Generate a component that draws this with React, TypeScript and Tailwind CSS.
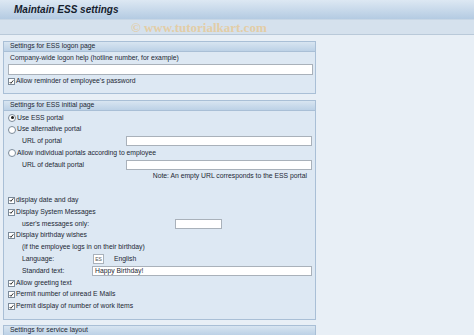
const Check = () => (
  <span className="w-[7px] h-[7px] border border-[#7b8a99] bg-white flex items-center justify-center mr-[1px] shrink-0">
    <svg width="6" height="6" viewBox="0 0 6 6">
      <path d="M0.8 3 L2.3 4.6 L5.2 1" stroke="#1a1a1a" strokeWidth="1.1" fill="none" />
    </svg>
  </span>
)

const Radio = ({ on }: { on?: boolean }) => (
  <span className="w-[8px] h-[8px] rounded-full border border-[#7b8a99] bg-white flex items-center justify-center mr-[1px] shrink-0">
    {on && <span className="w-[3px] h-[3px] rounded-full bg-[#1a1a1a]" />}
  </span>
)

const Row = ({ children, className = '' }: { children?: React.ReactNode; className?: string }) => (
  <div className={`h-[11.8px] flex items-center ${className}`}>{children}</div>
)

const Input = ({ className = '', value = '' }: { className?: string; value?: string }) => (
  <div className={`h-[10px] bg-white border border-[#a9b1ba] flex items-center pl-[2px] ${className}`}>{value}</div>
)

const Header = ({ text }: { text: string }) => (
  <div className="h-[10px] flex items-center pl-[6px] bg-gradient-to-b from-[#d8e5f1] to-[#bcd1e6] border-b border-[#a9bfd6]">
    {text}
  </div>
)

export default function App() {
  return (
    <div className="w-[474px] h-[335px] overflow-hidden bg-[#e8eff6] text-[#1c2733] text-[6.8px] leading-none" style={{ fontFamily: '"Liberation Sans", Arial, sans-serif' }}>
      <div className="h-[20px] flex items-center pl-[14px] bg-gradient-to-b from-[#dde8f3] to-[#b4cbe2] border-b border-[#c7d6e5]">
        <span className="text-[10px] font-bold italic text-[#15202c]">Maintain ESS settings</span>
      </div>
      <div className="h-[15px] flex items-center pl-[131px] bg-[#d5e1ed] border-b border-[#b9c9d9]">
        <span className="text-[13px] font-bold text-[#e3cda6]" style={{ fontFamily: '"Liberation Serif", serif' }}>
          © www.tutorialkart.com
        </span>
      </div>

      <div className="ml-[3px] w-[313px] mt-[6px] border border-[#a9bfd6] bg-[#dde8f3]">
        <Header text="Settings for ESS logon page" />
        <div className="px-[2px] pb-[5px]">
          <Row className="pl-[4px] h-[12px]">Company-wide logon help (hotline number, for example)</Row>
          <Input className="ml-[2px] w-[305px] h-[11px]" />
          <Row className="h-[13px] pl-[2px]"><Check />Allow reminder of employee's password</Row>
        </div>
      </div>

      <div className="ml-[3px] w-[313px] mt-[6px] border border-[#a9bfd6] bg-[#dde8f3]">
        <Header text="Settings for ESS initial page" />
        <div className="px-[2px] pt-[1px] pb-[6px]">
          <Row className="pl-[2px]"><Radio on />Use ESS portal</Row>
          <Row className="pl-[2px]"><Radio />Use alternative portal</Row>
          <Row className="pl-[16px]"><span className="w-[104px]">URL of portal</span><Input className="w-[186px]" /></Row>
          <Row className="pl-[2px]"><Radio />Allow individual portals according to employee</Row>
          <Row className="pl-[16px]"><span className="w-[104px]">URL of default portal</span><Input className="w-[186px]" /></Row>
          <Row className="justify-end pr-[6px]">Note: An empty URL corresponds to the ESS portal</Row>
          <Row />
          <Row className="pl-[2px]"><Check />display date and day</Row>
          <Row className="pl-[2px]"><Check />Display System Messages</Row>
          <Row className="pl-[16px]"><span className="w-[153px]">user's messages only:</span><Input className="w-[47px]" /></Row>
          <Row className="pl-[2px]"><Check />Display birthday wishes</Row>
          <Row className="pl-[16px]">(if the employee logs in on their birthday)</Row>
          <Row className="pl-[16px]">
            <span className="w-[71px]">Language:</span>
            <span className="w-[11px] h-[10px] bg-white border border-[#a9b1ba] text-[5px] flex items-center justify-center text-[#555]">ES</span>
            <span className="ml-[10px]">English</span>
          </Row>
          <Row className="pl-[16px]"><span className="w-[70px]">Standard text:</span><Input className="w-[220px]" value="Happy Birthday!" /></Row>
          <Row className="pl-[2px]"><Check />Allow greeting text</Row>
          <Row className="pl-[2px]"><Check />Permit number of unread E Mails</Row>
          <Row className="pl-[2px]"><Check />Permit display of number of work items</Row>
        </div>
      </div>

      <div className="ml-[3px] w-[313px] mt-[5px] border border-[#a9bfd6] bg-[#dde8f3]">
        <Header text="Settings for service layout" />
        <div className="h-[20px]" />
      </div>
    </div>
  )
}
